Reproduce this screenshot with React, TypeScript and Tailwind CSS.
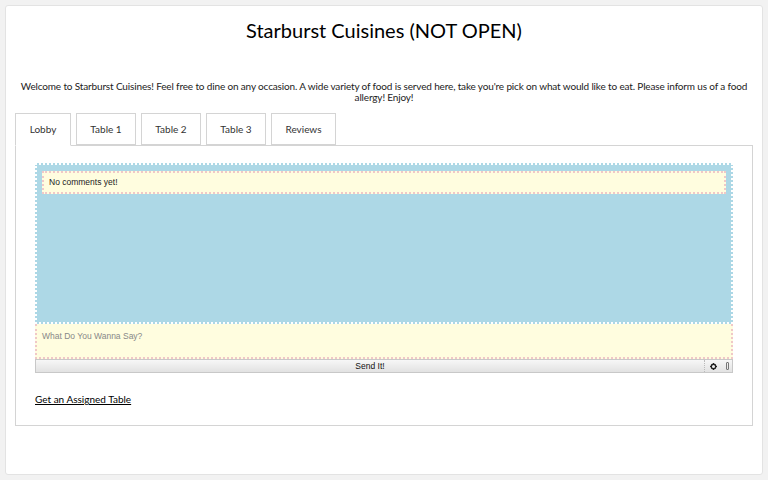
import React, { useState } from "react";

const tabs = [
  { name: "Lobby", w: "w-[56px]" },
  { name: "Table 1", w: "w-[60px]" },
  { name: "Table 2", w: "w-[60px]" },
  { name: "Table 3", w: "w-[60px]" },
  { name: "Reviews", w: "w-[65px]" },
];

const font = { fontFamily: "Lato, 'Noto Sans', sans-serif" };

export default function App() {
  const [active, setActive] = useState("Lobby");

  return (
    <div className="w-[768px] h-[480px] bg-[#f2f2f2] p-[5px]" style={font}>
      <div className="h-[470px] bg-white border border-[#e3e3e3] rounded-[3px] px-[9px] flex flex-col">
        <h1 className="text-center text-[20px] leading-[24px] font-normal text-black mt-[12px]">
          Starburst Cuisines (NOT OPEN)
        </h1>
        <p className="text-center text-[10px] leading-[11px] tracking-[-0.15px] text-[#222] mt-[39px]">
          Welcome to Starburst Cuisines! Feel free to dine on any occasion. A wide variety of food is
          served here, take you're pick on what would like to eat. Please inform us of a food
          allergy! Enjoy!
        </p>

        {/* tabs */}
        <div className="flex gap-[5px] mt-[10px] relative z-10">
          {tabs.map((t) => (
            <button
              key={t.name}
              onClick={() => setActive(t.name)}
              className={`${t.w} whitespace-nowrap text-[10px] text-[#333] bg-white border border-[#d4d4d4] ${
                active === t.name ? "border-b-white h-[33px]" : "h-[32px]"
              }`}
            >
              {t.name}
            </button>
          ))}
        </div>

        {/* panel */}
        <div className="-mt-px border border-[#d4d4d4] h-[281px] w-[738px] px-[19px] pt-[17px]">
          <div className="flex flex-col" style={{ fontFamily: "'Liberation Sans', Arial, sans-serif" }}>
            <div className="h-[161px] bg-[#add8e6] border-2 border-dotted border-white px-[5px] pt-[6px]">
              <div className="h-[23px] bg-[#fffddf] border-2 border-dotted border-[#f0c8c8] flex items-center px-[5px] text-[8.5px] text-[#222]">
                No comments yet!
              </div>
            </div>
            <div className="h-[35px] bg-[#fffddf] border-2 border-dotted border-[#f0c8c8] border-t-0 px-[5px] pt-[6px] text-[8.5px] text-[#888]">
              What Do You Wanna Say?
            </div>
            <div className="h-[14px] flex border border-[#c8c8c8] bg-gradient-to-b from-[#f7f7f7] to-[#e2e2e2] text-[8.5px] text-[#111]">
              <button className="flex-1 leading-[12px]">Send It!</button>
              <div className="w-[18px] flex items-center justify-center border-l border-dotted border-[#bbb]">
                <svg width="7" height="7" viewBox="0 0 10 10">
                  <circle cx="5" cy="5" r="3.2" fill="none" stroke="#222" strokeWidth="2" />
                  <path d="M5 0v2M5 8v2M0 5h2M8 5h2" stroke="#222" strokeWidth="1.6" />
                </svg>
              </div>
              <div className="w-[10px] flex items-center justify-center">
                <div className="w-[3px] h-[8px] border border-[#777] rounded-[1px]" />
              </div>
            </div>
          </div>
          <a href="#" className="inline-block mt-[19px] text-[10px] text-black underline">
            Get an Assigned Table
          </a>
        </div>
      </div>
    </div>
  );
}
